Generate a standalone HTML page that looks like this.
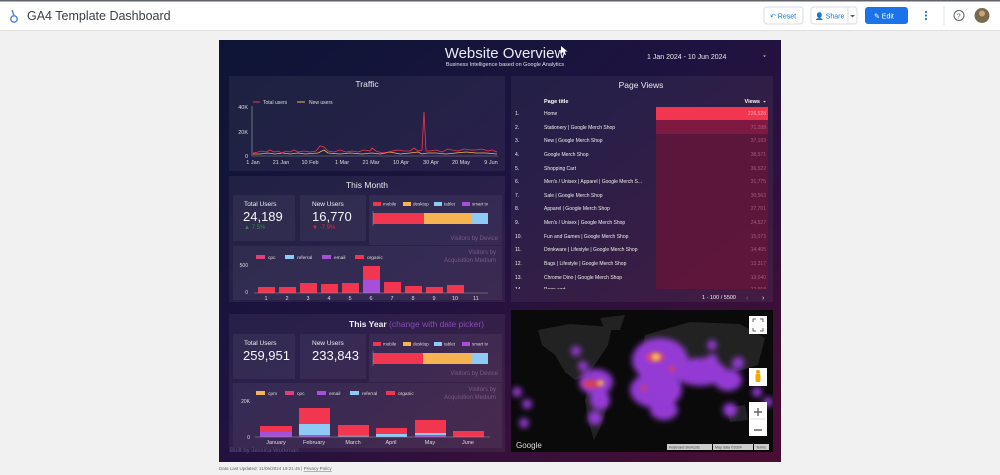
<!DOCTYPE html>
<html><head><meta charset="utf-8"><style>
html,body{margin:0;padding:0;width:1000px;height:475px;overflow:hidden;background:#f1f1f1;font-family:"Liberation Sans",Arial,sans-serif}
svg{position:absolute;left:0;top:0}
</style></head><body>
<svg width="1000" height="475" viewBox="0 0 1000 475" font-family="Liberation Sans, Arial, sans-serif">
<defs>
<linearGradient id="bg" x1="0" y1="0" x2="1" y2="1">
<stop offset="0" stop-color="#0d1535"/><stop offset="0.45" stop-color="#1e1340"/><stop offset="1" stop-color="#4a0d34"/>
</linearGradient>
<filter id="bl" x="-50%" y="-50%" width="200%" height="200%"><feGaussianBlur stdDeviation="3"/></filter>
<filter id="bl2" x="-50%" y="-50%" width="200%" height="200%"><feGaussianBlur stdDeviation="2"/></filter>
<clipPath id="mc"><rect x="511" y="310" width="262" height="142"/></clipPath>
<clipPath id="pc"><rect x="511" y="76" width="262" height="213"/></clipPath>
</defs>
<!-- header -->
<rect x="0" y="0" width="1000" height="31" fill="#fff"/>
<rect x="0" y="0" width="1000" height="1.5" fill="#5f6368"/>
<rect x="0" y="30" width="1000" height="1" fill="#e0e0e0"/>
<circle cx="14" cy="19" r="3.2" fill="none" stroke="#4f7fdc" stroke-width="1.4"/>
<path d="M12 10 L14 15.5" stroke="#4f7fdc" stroke-width="1.4" fill="none"/>
<text x="27" y="20" font-size="12.5" fill="#3c4043">GA4 Template Dashboard</text>
<rect x="764" y="7" width="39" height="17" rx="3" fill="#fff" stroke="#dadce0"/>
<text x="770" y="18.5" font-size="7" fill="#1a73e8">↶ Reset</text>
<rect x="811" y="7" width="46" height="17" rx="3" fill="#fff" stroke="#dadce0"/>
<line x1="848" y1="7" x2="848" y2="24" stroke="#dadce0"/>
<text x="815" y="18.5" font-size="7" fill="#1a73e8">👤 Share</text>
<path d="M850 15 l2.5 2.5 l2.5 -2.5z" fill="#5f6368"/>
<rect x="865" y="7" width="43" height="17" rx="3" fill="#1a73e8"/>
<text x="874" y="18.5" font-size="7" fill="#fff">✎  Edit</text>
<circle cx="926" cy="12" r="1.1" fill="#1a73e8"/><circle cx="926" cy="15.5" r="1.1" fill="#1a73e8"/><circle cx="926" cy="19" r="1.1" fill="#1a73e8"/>
<line x1="944" y1="6" x2="944" y2="25" stroke="#e0e0e0"/>
<circle cx="959" cy="15.5" r="5" fill="none" stroke="#5f6368" stroke-width="1"/>
<text x="956.7" y="18.5" font-size="7" fill="#5f6368">?</text>
<circle cx="982" cy="15.5" r="7.5" fill="#7a6a4a"/><circle cx="982" cy="13.5" r="3" fill="#c9a27f"/>

<!-- canvas -->
<rect x="219" y="40" width="562" height="422" fill="url(#bg)"/>
<text x="505" y="58" font-size="15" fill="#e8eaf4" text-anchor="middle">Website Overview</text>
<path d="M561 46 l0 8 l2 -2 l2 3 l1 -0.5 l-1.5 -3 l3 0z" fill="#fff"/>
<text x="505" y="66" font-size="5.5" fill="#e0e0ea" text-anchor="middle">Business Intelligence based on Google Analytics</text>
<text x="647" y="59" font-size="7" fill="#e8e8f0">1 Jan 2024 - 10 Jun 2024</text>
<path d="M763 55.5 l1.5 1.5 l1.5 -1.5z" fill="#ccc"/>

<!-- panels -->
<rect x="229" y="76" width="276" height="95" fill="#ffffff" opacity="0.06"/>
<rect x="229" y="176" width="276" height="126" fill="#ffffff" opacity="0.06"/>
<rect x="511" y="76" width="262" height="226" fill="#ffffff" opacity="0.05"/>
<rect x="229" y="314" width="276" height="138" fill="#ffffff" opacity="0.06"/>
<rect x="233" y="195" width="62" height="46" fill="#fff" opacity="0.05"/>
<rect x="300" y="195" width="66" height="46" fill="#fff" opacity="0.05"/>
<rect x="369" y="195" width="133" height="50" fill="#fff" opacity="0.05"/>
<rect x="233" y="246" width="269" height="54" fill="#fff" opacity="0.05"/>
<rect x="233" y="334" width="62" height="45" fill="#fff" opacity="0.05"/>
<rect x="300" y="334" width="66" height="45" fill="#fff" opacity="0.05"/>
<rect x="369" y="334" width="133" height="48" fill="#fff" opacity="0.05"/>
<rect x="233" y="383" width="269" height="65" fill="#fff" opacity="0.05"/>

<!-- Traffic -->
<text x="367" y="87" font-size="8.5" fill="#e8e8f0" text-anchor="middle">Traffic</text>
<line x1="253" y1="102" x2="260" y2="102" stroke="#f2364f" stroke-width="1"/><text x="263" y="104" font-size="5" fill="#ddd">Total users</text>
<line x1="297" y1="102" x2="305" y2="102" stroke="#f6b352" stroke-width="1"/><text x="309" y="104" font-size="5" fill="#ddd">New users</text>
<text x="248" y="109" font-size="5.5" fill="#ddd" text-anchor="end">40K</text>
<text x="248" y="134" font-size="5.5" fill="#ddd" text-anchor="end">20K</text>
<text x="248" y="158" font-size="5.5" fill="#ddd" text-anchor="end">0</text>
<line x1="252" y1="106" x2="252" y2="156" stroke="#aaa" stroke-width="0.6"/>
<line x1="252" y1="156" x2="498" y2="156" stroke="#888" stroke-width="0.6"/>
<polyline fill="none" stroke="#f6b352" stroke-width="0.8" points="253,154 260,154 268,153 275,154 283,153 290,154 298,153 305,154 318,153 324,150 328,153 340,154 350,153 362,154 372,153 380,154 390,152 400,154 410,153 418,152 422,154 428,153 436,153 446,154 456,153 466,152 476,153 486,153 497,154"/>
<polyline fill="none" stroke="#f2364f" stroke-width="0.8" points="253,153 258,152 262,151 266,152 270,150 274,152 278,151 282,153 286,151 290,152 294,150 298,152 304,151 310,152 316,151 320,146 324,147 328,151 334,152 340,150 346,152 352,151 358,152 364,150 370,151 372,148 376,151 382,153 388,152 392,151 398,150 404,151 410,151 414,148 418,151 422,150 424,112 426,151 430,151 436,150 442,152 448,149 452,150 458,151 464,149 470,150 476,150 482,149 488,151 492,150 497,152"/>
<g font-size="5.5" fill="#ddd" text-anchor="middle">
<text x="253" y="164">1 Jan</text><text x="281" y="164">21 Jan</text><text x="310" y="164">10 Feb</text><text x="342" y="164">1 Mar</text><text x="371" y="164">21 Mar</text><text x="401" y="164">10 Apr</text><text x="431" y="164">30 Apr</text><text x="461" y="164">20 May</text><text x="491" y="164">9 Jun</text></g>

<!-- This Month -->
<text x="367" y="188" font-size="8.5" fill="#e8e8f0" text-anchor="middle">This Month</text>
<text x="244" y="206" font-size="6.5" fill="#eee">Total Users</text>
<text x="243" y="221" font-size="13" fill="#f4f4f8">24,189</text>
<text x="244" y="229" font-size="6" fill="#3a8a4a">▲ 7.5%</text>
<text x="312" y="206" font-size="6.5" fill="#eee">New Users</text>
<text x="312" y="221" font-size="13" fill="#f4f4f8">16,770</text>
<text x="312" y="229" font-size="6" fill="#d0314a">▼ -7.9%</text>
<g font-size="4.5" fill="#ddd">
<rect x="373" y="202" width="8" height="4" fill="#f2364f"/><text x="383" y="205.5">mobile</text>
<rect x="403" y="202" width="8" height="4" fill="#f6b352"/><text x="413" y="205.5">desktop</text>
<rect x="434" y="202" width="8" height="4" fill="#8fcaf5"/><text x="444" y="205.5">tablet</text>
<rect x="462" y="202" width="8" height="4" fill="#a64fd8"/><text x="472" y="205.5">smart tv</text></g>
<rect x="373" y="213" width="51" height="11" fill="#f2364f"/>
<rect x="424" y="213" width="48" height="11" fill="#f6b352"/>
<rect x="472" y="213" width="16" height="11" fill="#8fcaf5"/>
<line x1="373" y1="211" x2="373" y2="226" stroke="#999" stroke-width="0.5"/>
<text x="498" y="240" font-size="6" fill="#7a5a85" text-anchor="end">Visitors by Device</text>
<text x="496" y="254" font-size="6" fill="#7a5a85" text-anchor="end">Visitors by</text>
<text x="496" y="262" font-size="6" fill="#7a5a85" text-anchor="end">Acquisition Medium</text>
<g font-size="4.8" fill="#ddd">
<rect x="256" y="255" width="9" height="4" fill="#e0407a"/><text x="268" y="259">cpc</text>
<rect x="285" y="255" width="9" height="4" fill="#8fcaf5"/><text x="297" y="259">referral</text>
<rect x="322" y="255" width="9" height="4" fill="#a64fd8"/><text x="334" y="259">email</text>
<rect x="355" y="255" width="9" height="4" fill="#f2364f"/><text x="367" y="259">organic</text></g>
<text x="248" y="267" font-size="5" fill="#ddd" text-anchor="end">500</text>
<text x="248" y="294" font-size="5" fill="#ddd" text-anchor="end">0</text>
<g fill="#f2364f">
<rect x="258" y="287" width="17" height="6"/><rect x="279" y="287" width="17" height="6"/><rect x="300" y="283" width="17" height="10"/><rect x="321" y="284" width="17" height="9"/><rect x="342" y="283" width="17" height="10"/><rect x="363" y="266" width="17" height="14"/><rect x="384" y="282" width="17" height="11"/><rect x="405" y="286" width="17" height="7"/><rect x="426" y="287" width="17" height="6"/><rect x="447" y="285" width="17" height="8"/></g>
<rect x="363" y="280" width="17" height="13" fill="#a64fd8"/>
<line x1="254" y1="293" x2="488" y2="293" stroke="#999" stroke-width="0.6"/>
<g font-size="5.5" fill="#ddd" text-anchor="middle"><text x="266" y="300">1</text><text x="287" y="300">2</text><text x="308" y="300">3</text><text x="329" y="300">4</text><text x="350" y="300">5</text><text x="371" y="300">6</text><text x="392" y="300">7</text><text x="413" y="300">8</text><text x="434" y="300">9</text><text x="455" y="300">10</text><text x="476" y="300">11</text></g>

<!-- Page Views -->
<text x="641" y="88" font-size="8.5" fill="#e8e8f0" text-anchor="middle">Page Views</text>
<text x="544" y="103" font-size="5.5" fill="#fff" font-weight="bold">Page title</text>
<text x="760" y="103" font-size="5.5" fill="#fff" font-weight="bold" text-anchor="end">Views</text>
<path d="M763 101 l1.5 1.5 l1.5 -1.5z" fill="#ddd"/>
<rect x="656" y="120" width="112" height="169" fill="#6a1438" opacity="0.75"/>
<rect x="656" y="107" width="112" height="13" fill="#f2364f"/>
<rect x="656" y="120" width="112" height="14" fill="#7e1a42"/>
<g font-size="5" fill="#eee">
<text x="515" y="115">1.</text><text x="544" y="115">Home</text>
<text x="515" y="129">2.</text><text x="544" y="129">Stationery | Google Merch Shop</text>
<text x="515" y="142">3.</text><text x="544" y="142">New | Google Merch Shop</text>
<text x="515" y="156">4.</text><text x="544" y="156">Google Merch Shop</text>
<text x="515" y="170">5.</text><text x="544" y="170">Shopping Cart</text>
<text x="515" y="183">6.</text><text x="544" y="183">Men's / Unisex | Apparel | Google Merch S...</text>
<text x="515" y="197">7.</text><text x="544" y="197">Sale | Google Merch Shop</text>
<text x="515" y="210">8.</text><text x="544" y="210">Apparel | Google Merch Shop</text>
<text x="515" y="224">9.</text><text x="544" y="224">Men's / Unisex | Google Merch Shop</text>
<text x="515" y="238">10.</text><text x="544" y="238">Fun and Games | Google Merch Shop</text>
<text x="515" y="251">11.</text><text x="544" y="251">Drinkware | Lifestyle | Google Merch Shop</text>
<text x="515" y="265">12.</text><text x="544" y="265">Bags | Lifestyle | Google Merch Shop</text>
<text x="515" y="279">13.</text><text x="544" y="279">Chrome Dino | Google Merch Shop</text>
<g clip-path="url(#pc)"><text x="515" y="291">14.</text><text x="544" y="291">Page cart</text></g>
</g>
<g font-size="5" fill="#a0607a" text-anchor="end">
<text x="766" y="115" fill="#f8a0b0">226,528</text><text x="766" y="129">71,288</text><text x="766" y="142">37,193</text><text x="766" y="156">38,571</text><text x="766" y="170">36,522</text><text x="766" y="183">31,775</text><text x="766" y="197">30,563</text><text x="766" y="210">27,701</text><text x="766" y="224">24,527</text><text x="766" y="238">15,073</text><text x="766" y="251">14,405</text><text x="766" y="265">13,317</text><text x="766" y="279">13,040</text><g clip-path="url(#pc)"><text x="766" y="291">12,918</text></g></g>
<text x="736" y="299" font-size="5.5" fill="#eee" text-anchor="end">1 - 100 / 5500</text>
<text x="746" y="300" font-size="7" fill="#777">‹</text>
<text x="762" y="300" font-size="7" fill="#eee">›</text>

<!-- This Year -->
<text x="349" y="327" font-size="8.5" fill="#eef" font-weight="bold">This Year <tspan font-weight="normal" fill="#8a4ab8">(change with date picker)</tspan></text>
<text x="244" y="345" font-size="6.5" fill="#eee">Total Users</text>
<text x="243" y="360" font-size="13" fill="#f4f4f8">259,951</text>
<text x="312" y="345" font-size="6.5" fill="#eee">New Users</text>
<text x="312" y="360" font-size="13" fill="#f4f4f8">233,843</text>
<g font-size="4.5" fill="#ddd">
<rect x="373" y="342" width="8" height="4" fill="#f2364f"/><text x="383" y="345.5">mobile</text>
<rect x="403" y="342" width="8" height="4" fill="#f6b352"/><text x="413" y="345.5">desktop</text>
<rect x="434" y="342" width="8" height="4" fill="#8fcaf5"/><text x="444" y="345.5">tablet</text>
<rect x="462" y="342" width="8" height="4" fill="#a64fd8"/><text x="472" y="345.5">smart tv</text></g>
<rect x="373" y="353" width="50" height="11" fill="#f2364f"/>
<rect x="423" y="353" width="49" height="11" fill="#f6b352"/>
<rect x="472" y="353" width="16" height="11" fill="#8fcaf5"/>
<line x1="373" y1="351" x2="373" y2="366" stroke="#999" stroke-width="0.5"/>
<text x="498" y="375" font-size="6" fill="#7a5a85" text-anchor="end">Visitors by Device</text>
<text x="496" y="391" font-size="6" fill="#7a5a85" text-anchor="end">Visitors by</text>
<text x="496" y="399" font-size="6" fill="#7a5a85" text-anchor="end">Acquisition Medium</text>
<g font-size="4.8" fill="#ddd">
<rect x="256" y="391" width="9" height="4" fill="#f6b352"/><text x="268" y="395">cpm</text>
<rect x="285" y="391" width="9" height="4" fill="#e0407a"/><text x="297" y="395">cpc</text>
<rect x="317" y="391" width="9" height="4" fill="#a64fd8"/><text x="329" y="395">email</text>
<rect x="350" y="391" width="9" height="4" fill="#8fcaf5"/><text x="362" y="395">referral</text>
<rect x="386" y="391" width="9" height="4" fill="#f2364f"/><text x="398" y="395">organic</text></g>
<text x="250" y="403" font-size="5" fill="#ddd" text-anchor="end">20K</text>
<text x="250" y="439" font-size="5" fill="#ddd" text-anchor="end">0</text>
<rect x="260" y="426" width="32" height="11" fill="#f2364f"/><rect x="260" y="432" width="32" height="5" fill="#a64fd8"/>
<rect x="299" y="408" width="31" height="29" fill="#f2364f"/><rect x="299" y="424" width="31" height="11" fill="#8fcaf5"/><rect x="299" y="435" width="31" height="2" fill="#a64fd8"/>
<rect x="338" y="425" width="31" height="12" fill="#f2364f"/><rect x="338" y="435" width="31" height="2" fill="#8f7aa0"/>
<rect x="376" y="428" width="31" height="9" fill="#f2364f"/><rect x="376" y="434" width="31" height="3" fill="#8fcaf5"/>
<rect x="415" y="420" width="31" height="17" fill="#f2364f"/><rect x="415" y="433" width="31" height="2" fill="#8fcaf5"/><rect x="415" y="435" width="31" height="2" fill="#a64fd8"/>
<rect x="453" y="431" width="31" height="6" fill="#f2364f"/>
<line x1="255" y1="437" x2="490" y2="437" stroke="#999" stroke-width="0.6"/>
<g font-size="5.5" fill="#ddd" text-anchor="middle"><text x="276" y="444">January</text><text x="314" y="444">February</text><text x="353" y="444">March</text><text x="391" y="444">April</text><text x="430" y="444">May</text><text x="468" y="444">June</text></g>
<text x="230" y="452" font-size="6" fill="#5e4a78">Built by Jessica Workman</text>

<!-- Map -->
<rect x="511" y="310" width="262" height="142" fill="#0a0a0a"/>
<g clip-path="url(#mc)">
<g fill="#222">
<path d="M538 330 L570 324 L612 327 L608 345 L598 360 L588 375 L575 380 L565 372 L555 355 L542 345Z"/>
<path d="M590 385 L603 390 L608 405 L600 428 L594 440 L588 420 L585 400Z"/>
<path d="M600 318 L625 315 L620 330 L605 330Z"/>
<path d="M645 335 L690 322 L740 324 L765 338 L758 365 L735 372 L715 370 L700 360 L685 375 L676 395 L668 408 L656 395 L644 380 L636 365 L642 352Z"/>
<path d="M726 408 L745 405 L748 420 L730 422Z"/>
</g>
<g filter="url(#bl)" fill="#9b3de0" opacity="0.95">
<circle cx="576" cy="351" r="5"/><circle cx="583" cy="366" r="5"/>
<ellipse cx="596" cy="382" rx="17" ry="13"/><ellipse cx="600" cy="400" rx="10" ry="10"/><circle cx="595" cy="418" r="7"/>
<circle cx="517" cy="392" r="5"/><circle cx="527" cy="404" r="5"/><circle cx="524" cy="423" r="5"/>
<ellipse cx="660" cy="360" rx="28" ry="22"/><ellipse cx="656" cy="390" rx="26" ry="18"/><ellipse cx="664" cy="410" rx="14" ry="10"/>
<ellipse cx="700" cy="372" rx="26" ry="14"/><circle cx="712" cy="345" r="5"/><circle cx="712" cy="360" r="6"/>
<ellipse cx="728" cy="380" rx="14" ry="11"/><circle cx="738" cy="363" r="6"/><circle cx="730" cy="410" r="7"/><circle cx="757" cy="392" r="5"/><circle cx="768" cy="402" r="5"/>
</g>
<g filter="url(#bl2)">
<ellipse cx="655" cy="357" rx="9" ry="5" fill="#e04a6a"/><circle cx="656" cy="357" r="3.5" fill="#f6c850"/>
<ellipse cx="592" cy="384" rx="10" ry="4" fill="#d8405a"/><circle cx="601" cy="383" r="3" fill="#f6b84a"/>
<circle cx="672" cy="369" r="3" fill="#d8405a"/><circle cx="644" cy="388" r="3" fill="#c8406a"/>
</g>
</g>
<text x="516" y="448" font-size="8" fill="#ddd">Google</text>
<rect x="667" y="444" width="45" height="6" fill="#ccc"/><text x="669" y="448.5" font-size="3.6" fill="#444">Keyboard shortcuts</text>
<rect x="713" y="444" width="40" height="6" fill="#ccc"/><text x="715" y="448.5" font-size="3.6" fill="#444">Map data ©2024</text>
<rect x="754" y="444" width="15" height="6" fill="#ccc"/><text x="756" y="448.5" font-size="3.6" fill="#444">Terms</text>
<rect x="749" y="316" width="18" height="18" fill="#fff"/>
<path d="M753 322v-3h3M763 322v-3h-3M753 328v3h3M763 328v3h-3" stroke="#666" stroke-width="1" fill="none"/>
<rect x="749" y="368" width="18" height="18" fill="#fff"/>
<circle cx="758" cy="372" r="2" fill="#f2a900"/><rect x="755.5" y="374" width="5" height="8" rx="1.5" fill="#f2a900"/>
<rect x="749" y="402" width="18" height="34" fill="#fff"/>
<path d="M754 412h8M758 408v8M754 430h8" stroke="#666" stroke-width="1.4"/>
<line x1="751" y1="419" x2="765" y2="419" stroke="#ddd"/>

<text x="219" y="470" font-size="4.5" fill="#666">Data Last Updated: 11/06/2024 19:21:45 | <tspan text-decoration="underline">Privacy Policy</tspan></text>
</svg>
</body></html>
